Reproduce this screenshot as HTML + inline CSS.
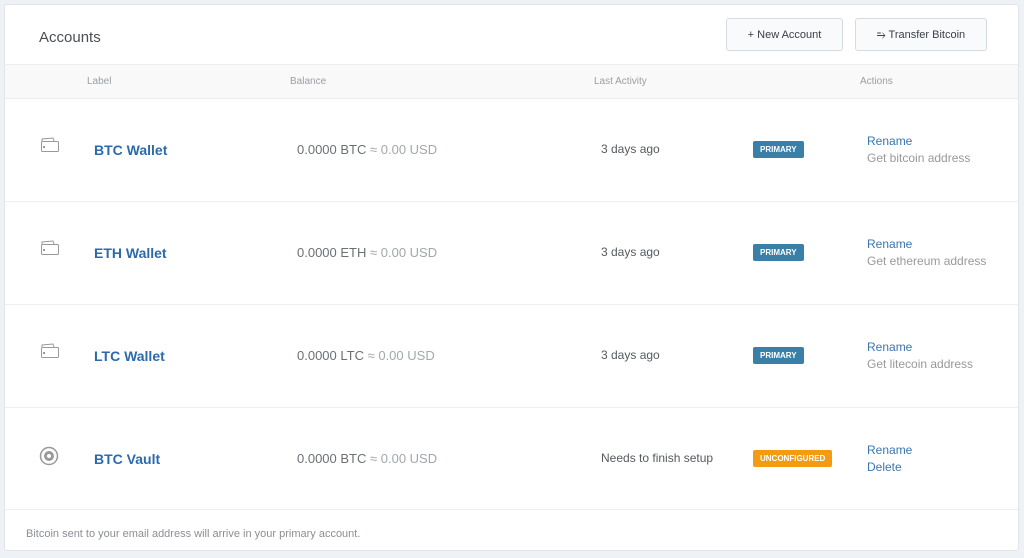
<!DOCTYPE html>
<html><head><meta charset="utf-8"><style>
*{margin:0;padding:0;box-sizing:border-box}
body{width:1024px;height:558px;background:#eef2f6;font-family:"Liberation Sans",sans-serif;position:relative;overflow:hidden}
.card{position:absolute;left:4px;top:4px;width:1015px;height:547px;background:#fff;border:1px solid #e1e5ea;border-radius:3px}
.a{position:absolute}
.title{left:34px;top:24px;font-size:15px;color:#4a4f55}
.btn{top:13px;height:33px;border:1px solid #d6dbe1;border-radius:3px;background:#f9fafb;font-size:11px;color:#3a4048;text-align:center;line-height:32px}
.hdr{left:0;top:59px;width:1013px;height:34px;background:#f9f9f9;border-top:1px solid #eceef0}
.hdr span{position:absolute;top:11px;font-size:10px;color:#9a9ea3}
.row{left:0;width:1013px;height:103px;border-top:1px solid #eceef0}
.name{left:89px;font-size:14px;font-weight:bold;color:#2a6aad;top:43px}
.bal{left:292px;font-size:13px;color:#6b7075;top:43px}
.bal i{font-style:normal;color:#a3a7ab}
.act{left:596px;font-size:12px;color:#555a5f;top:43px}
.badge{left:748px;top:42px;height:17px;padding:0 7px;font-size:8px;font-weight:bold;color:#fff;line-height:17px;border-radius:2px;background:#3a7fa8}
.links{left:862px;top:34px;font-size:12px;line-height:17px}
.links div:first-child{color:#3a76b0}
.wallet{left:35px;top:38px}
.foot{left:0;top:504px;width:1013px;border-top:1px solid #eceef0;height:42px}
.foot span{position:absolute;left:21px;top:18px;font-size:11px;color:#8a8e93}
</style></head><body>
<div class="card">
<div class="a title">Accounts</div>
<div class="a btn" style="left:721px;width:117px">+ New Account</div>
<div class="a btn" style="left:850px;width:132px">⥱ Transfer Bitcoin</div>
<div class="a hdr"><span style="left:82px">Label</span><span style="left:285px">Balance</span><span style="left:589px">Last Activity</span><span style="left:855px">Actions</span></div>

<div class="a row" style="top:93px">
<svg class="a wallet" width="20" height="16" viewBox="0 0 20 16"><path d="M2 4 L2 2 L13 1 L14 4" fill="none" stroke="#999" stroke-width="1"/><rect x="1.5" y="4.5" width="17" height="10" rx="1" fill="none" stroke="#999"/><rect x="3" y="9" width="2" height="2" fill="#999"/></svg>
<div class="a name">BTC Wallet</div><div class="a bal">0.0000 BTC <i>≈ 0.00 USD</i></div><div class="a act">3 days ago</div><div class="a badge">PRIMARY</div>
<div class="a links"><div>Rename</div><div style="color:#999">Get bitcoin address</div></div></div>

<div class="a row" style="top:196px">
<svg class="a wallet" width="20" height="16" viewBox="0 0 20 16"><path d="M2 4 L2 2 L13 1 L14 4" fill="none" stroke="#999" stroke-width="1"/><rect x="1.5" y="4.5" width="17" height="10" rx="1" fill="none" stroke="#999"/><rect x="3" y="9" width="2" height="2" fill="#999"/></svg>
<div class="a name">ETH Wallet</div><div class="a bal">0.0000 ETH <i>≈ 0.00 USD</i></div><div class="a act">3 days ago</div><div class="a badge">PRIMARY</div>
<div class="a links"><div>Rename</div><div style="color:#999">Get ethereum address</div></div></div>

<div class="a row" style="top:299px">
<svg class="a wallet" width="20" height="16" viewBox="0 0 20 16"><path d="M2 4 L2 2 L13 1 L14 4" fill="none" stroke="#999" stroke-width="1"/><rect x="1.5" y="4.5" width="17" height="10" rx="1" fill="none" stroke="#999"/><rect x="3" y="9" width="2" height="2" fill="#999"/></svg>
<div class="a name">LTC Wallet</div><div class="a bal">0.0000 LTC <i>≈ 0.00 USD</i></div><div class="a act">3 days ago</div><div class="a badge">PRIMARY</div>
<div class="a links"><div>Rename</div><div style="color:#999">Get litecoin address</div></div></div>

<div class="a row" style="top:402px">
<svg class="a" style="left:34px;top:38px" width="20" height="20" viewBox="0 0 20 20"><circle cx="10" cy="10" r="8.5" fill="none" stroke="#999" stroke-width="1.5"/><circle cx="10" cy="10" r="5" fill="#999"/><circle cx="10" cy="10" r="2" fill="#fff"/></svg>
<div class="a name">BTC Vault</div><div class="a bal">0.0000 BTC <i>≈ 0.00 USD</i></div><div class="a act">Needs to finish setup</div><div class="a badge" style="background:#f39c12">UNCONFIGURED</div>
<div class="a links"><div>Rename</div><div style="color:#3a76b0">Delete</div></div></div>

<div class="a foot"><span>Bitcoin sent to your email address will arrive in your primary account.</span></div>
</div>
</body></html>
